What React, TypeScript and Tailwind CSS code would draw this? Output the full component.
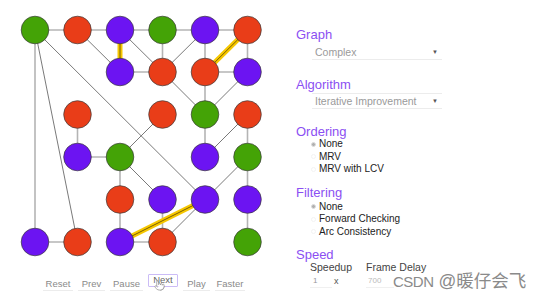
import { Pointer } from "lucide-react";

const COLS = [35, 77.5, 120, 162.5, 205, 247.5];
const ROWS = [30, 72, 114.5, 157, 199.5, 242];

const GREEN = "#44a306";
const RED = "#e93d18";
const PURPLE = "#6c14f2";

// [col, row, colour]
const nodes: [number, number, string][] = [
  [0, 0, GREEN], [1, 0, RED], [2, 0, PURPLE], [3, 0, GREEN], [4, 0, PURPLE], [5, 0, RED],
  [2, 1, PURPLE], [3, 1, RED], [4, 1, RED], [5, 1, PURPLE],
  [1, 2, RED], [3, 2, RED], [4, 2, GREEN], [5, 2, RED],
  [1, 3, PURPLE], [2, 3, GREEN], [4, 3, PURPLE], [5, 3, GREEN],
  [2, 4, RED], [3, 4, PURPLE], [4, 4, PURPLE], [5, 4, PURPLE],
  [0, 5, PURPLE], [1, 5, RED], [2, 5, PURPLE], [3, 5, RED], [5, 5, GREEN],
];

type Pt = [number, number];
const edges: [Pt, Pt][] = [
  [[0, 0], [1, 0]], [[1, 0], [2, 0]], [[2, 0], [3, 0]], [[3, 0], [4, 0]], [[4, 0], [5, 0]],
  [[0, 0], [0, 5]], [[0, 0], [1, 5]], [[0, 0], [4, 4]],
  [[1, 0], [2, 1]], [[2, 0], [3, 1]], [[3, 0], [3, 1]], [[4, 0], [3, 1]],
  [[4, 0], [4, 1]], [[5, 0], [5, 1]],
  [[2, 1], [3, 1]], [[4, 1], [5, 1]],
  [[3, 1], [4, 2]], [[4, 1], [4, 2]], [[5, 1], [4, 2]],
  [[1, 2], [1, 3]], [[3, 2], [2, 3]], [[4, 2], [4, 3]], [[5, 2], [4, 3]], [[5, 2], [5, 3]],
  [[1, 3], [2, 3]], [[2, 3], [2, 4]], [[2, 3], [3, 4]], [[5, 3], [4, 4]], [[5, 3], [5, 4]],
  [[2, 4], [2, 5]], [[4, 4], [3, 5]], [[3, 4], [3, 5]], [[5, 4], [5, 5]],
  [[0, 5], [1, 5]], [[2, 5], [3, 5]],
];

// edges that the solver is currently looking at
const hot: [Pt, Pt][] = [
  [[2, 0], [2, 1]],
  [[5, 0], [4, 1]],
  [[4, 4], [2, 5]],
];

const xy = ([c, r]: Pt) => [COLS[c], ROWS[r]];

const Graph = () => (
  <svg width="280" height="270" viewBox="0 0 280 270">
    {edges.map(([a, b], i) => {
      const [x1, y1] = xy(a);
      const [x2, y2] = xy(b);
      const straight = x1 === x2 || y1 === y2;
      return (
        <line
          key={i}
          x1={x1}
          y1={y1}
          x2={x2}
          y2={y2}
          stroke={straight ? "#b4b4b4" : "#6a6a6a"}
          strokeWidth={straight ? 1.6 : 0.9}
        />
      );
    })}
    {hot.map(([a, b], i) => {
      const [x1, y1] = xy(a);
      const [x2, y2] = xy(b);
      return (
        <g key={i}>
          <line x1={x1} y1={y1} x2={x2} y2={y2} stroke="#f6c700" strokeWidth={5} />
          <line x1={x1} y1={y1} x2={x2} y2={y2} stroke="#6b5200" strokeWidth={0.9} />
        </g>
      );
    })}
    {nodes.map(([c, r, fill]) => (
      <circle
        key={`${c}-${r}`}
        cx={COLS[c]}
        cy={ROWS[r]}
        r={13.8}
        fill={fill}
        stroke="#3a3a3a"
        strokeWidth={0.7}
      />
    ))}
  </svg>
);

const buttons = [
  { label: "Reset", w: "w-[30px]" },
  { label: "Prev", w: "w-[27px]" },
  { label: "Pause", w: "w-[33px]" },
  { label: "Next", w: "w-[30px]", active: true },
  { label: "Play", w: "w-[27px]" },
  { label: "Faster", w: "w-[30px]" },
];

const Header = ({ children, className = "" }: { children: string; className?: string }) => (
  <div className={`pl-[16px] text-[13px] leading-[16px] text-[#8b4ff2] ${className}`}>
    {children}
  </div>
);

const Select = ({ value, top = false }: { value: string; top?: boolean }) => (
  <div
    className={`ml-[32px] w-[130px] flex items-center justify-between pl-[3px] pr-[4px] border-b border-[#ececec] ${
      top ? "border-t h-[16px]" : "h-[17px] pt-[2px]"
    }`}
  >
    <span className="text-[10.5px] leading-[13px] text-[#9a9a9a]">{value}</span>
    <span className="text-[6px] text-[#555]">▼</span>
  </div>
);

const Radios = ({ items, className = "" }: { items: string[]; className?: string }) => (
  <div className={`ml-[31px] flex flex-col ${className}`}>
    {items.map((item, i) => (
      <div key={item} className="flex items-center h-[12.5px]">
        <span
          className={`w-[5px] h-[5px] rounded-full mr-[3px] ${
            i === 0 ? "bg-[#b0b0b0] border border-[#ddd]" : "border border-[#f3f3f3]"
          }`}
        />
        <span className="text-[10px] leading-[12px] text-[#222]">{item}</span>
      </div>
    ))}
  </div>
);

export default function App() {
  return (
    <div
      className="relative w-[544px] h-[298px] bg-white overflow-hidden flex"
      style={{ fontFamily: '"Liberation Sans", Arial, sans-serif' }}
    >
      <div className="w-[280px] flex flex-col">
        <Graph />
        <div className="relative flex gap-[5px] pl-[43px] mt-[4px]">
          {buttons.map((b) =>
            b.active ? (
              <div key={b.label} className={`${b.w} h-[13px] border border-[#cbbcf6] rounded-[1px] flex items-center justify-center text-[9.5px] text-[#666]`}>
                {b.label}
              </div>
            ) : (
              <div key={b.label} className={`${b.w} h-[17px] border-b border-[#ececec] pt-[3px] text-center text-[9.5px] leading-[13px] text-[#8a8a8a]`}>
                {b.label}
              </div>
            )
          )}
          <Pointer
            className="absolute left-[154px] top-[6px] text-[#888] fill-white"
            size={11}
            strokeWidth={1.5}
          />
        </div>
      </div>

      <div className="flex-1 flex flex-col pt-[27px]">
        <Header>Graph</Header>
        <Select value="Complex" />
        <Header className="mt-[17px]">Algorithm</Header>
        <Select value="Iterative Improvement" top />
        <Header className="mt-[15px]">Ordering</Header>
        <Radios items={["None", "MRV", "MRV with LCV"]} className="-mt-[2px]" />
        <Header className="mt-[9px]">Filtering</Header>
        <Radios items={["None", "Forward Checking", "Arc Consistency"]} />
        <Header className="mt-[9px]">Speed</Header>
        <div className="ml-[30px] -mt-[2px] flex gap-[12px] text-[10.5px] leading-[13px] text-[#444]">
          <div className="flex flex-col">
            <span>Speedup</span>
            <div className="flex items-center">
              <span className="w-[22px] pl-[3px] text-[8px] text-[#999] border-b border-[#f0f0f0]">1</span>
              <span className="ml-[2px] text-[9px] text-[#555]">x</span>
            </div>
          </div>
          <div className="flex flex-col ml-[2px]">
            <span>Frame Delay</span>
            <span className="w-[28px] pl-[2px] text-[8px] text-[#bbb] border-b border-[#f0f0f0]">700</span>
          </div>
        </div>
      </div>

      <div className="absolute left-[393px] top-[268px] flex items-baseline text-[#8a8a8a] whitespace-nowrap">
        <span className="text-[15px] tracking-[-0.5px]">CSDN</span>
        <span
          className="ml-[5px] text-[17.5px]"
          style={{ fontFamily: '"Liberation Sans", "Noto Sans CJK SC", sans-serif' }}
        >
          @暖仔会飞
        </span>
      </div>
    </div>
  );
}
